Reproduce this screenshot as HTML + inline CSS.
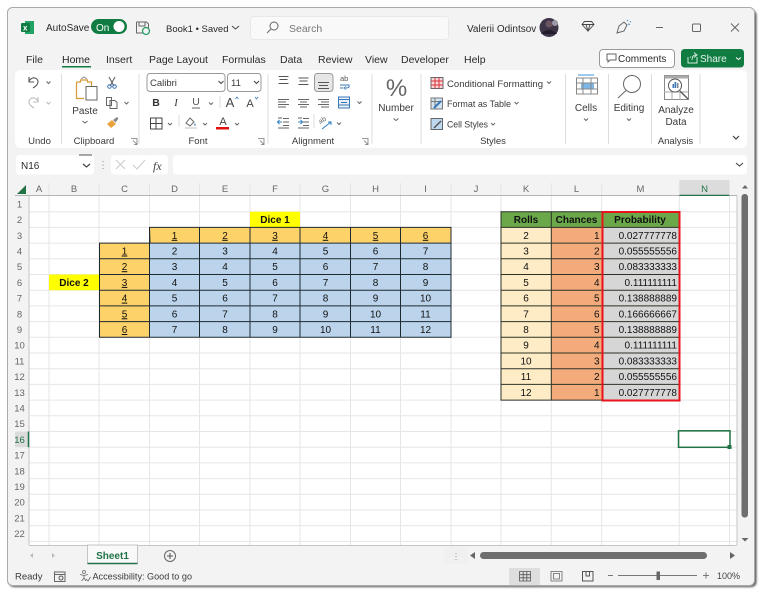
<!DOCTYPE html>
<html><head><meta charset="utf-8"><title>Book1 - Excel</title>
<style>
html,body{margin:0;padding:0;background:#fff;width:768px;height:599px;overflow:hidden}
svg{display:block;font-family:"Liberation Sans",sans-serif;filter:blur(.35px)}
.t{font-size:10.5px;fill:#2a2a2a}
.r{font-size:9.5px;fill:#3a3a3a}
.c{font-size:10px;fill:#111}
.b{font-weight:bold;fill:#111}
.u{text-decoration:underline}
.h{font-size:9.5px;fill:#666;text-anchor:middle}
.m{text-anchor:middle}
.e{text-anchor:end}
.l{fill:none;stroke:#666;stroke-width:1}
</style></head><body>
<svg width="768" height="599" viewBox="0 0 768 599" xmlns="http://www.w3.org/2000/svg">
<defs><filter id="sh" x="-5%" y="-5%" width="110%" height="110%"><feGaussianBlur stdDeviation="1"/></filter></defs>
<rect x="9" y="10" width="747.5" height="577" rx="5" fill="#555" filter="url(#sh)"/>
<rect x="7.5" y="7.5" width="747" height="578" rx="5" fill="#f3f3f3" stroke="#aaa" stroke-width="1"/>

<!-- title bar -->
<rect x="25" y="21" width="9" height="13" fill="#21a366"/><rect x="21" y="23" width="9" height="9" rx="1" fill="#107c41"/>
<text x="23" y="30.5" style="font-size:8px;font-weight:bold;fill:#fff">x</text>
<text x="46" y="31" class="t" style="font-size:10px">AutoSave</text>
<rect x="91" y="19" width="36" height="15" rx="7.5" fill="#107c41"/>
<text x="96" y="31" style="font-size:10px;fill:#fff">On</text>
<circle cx="119" cy="26.5" r="5.5" fill="#fff"/>
<path d="M136.5 22h10l2 2v4M136.5 22v11h6M139 22v4h6v-4" class="l"/><circle cx="146" cy="31" r="3.5" fill="none" stroke="#2a9a63" stroke-width="1.3"/>
<text x="166" y="32" class="t" style="font-size:9.5px">Book1 • Saved</text>
<path d="M232 26l3.5 3 3.500-3" fill="none" stroke="#444" stroke-width="1"/>
<rect x="250.5" y="16.5" width="198" height="23" rx="3" fill="#f9f9f9" stroke="#e8e8e8"/>
<circle cx="274" cy="26" r="4" class="l"/><path d="M271 29l-4 4" class="l"/>
<text x="289" y="32" class="t" style="font-size:10.5px;fill:#777">Search</text>
<text x="467" y="32" class="t" style="font-size:10px">Valerii Odintsov</text>
<circle cx="549" cy="27.5" r="9.5" fill="#3d3448"/><circle cx="549" cy="24" r="3.5" fill="#6b5560"/><path d="M541 34q8-8 16 0" fill="#231c2c"/><circle cx="555" cy="23" r="3" fill="#9a9aa8"/>
<path d="M582 24.5l2.5-3h7l2.500 3-6 6.500zM582 24.500h12M586 24.500l2 6.500 2-6.500" fill="none" stroke="#444" stroke-width=".9"/>
<path d="M617 33l2-7 5-4 3 3-3 6z" class="l"/><path d="M627 20l1 1M630 22l1-.5M628 24l2 .5" stroke="#4a90c8" fill="none"/>
<path d="M656 27.500h7" stroke="#666" fill="none"/>
<rect x="692.500" y="24" width="8" height="7.500" rx="1" class="l"/>
<path d="M731 23.500l8 8M739 23.500l-8 8" class="l"/>

<!-- tabs -->
<g class="t">
<text x="26" y="63">File</text><text x="62" y="63" style="fill:#222">Home</text>
<text x="106" y="63">Insert</text><text x="149" y="63">Page Layout</text>
<text x="222" y="63">Formulas</text><text x="280" y="63">Data</text>
<text x="318" y="63">Review</text><text x="365" y="63">View</text>
<text x="401" y="63">Developer</text><text x="464" y="63">Help</text>
</g>
<rect x="62" y="66" width="29" height="1.500" fill="#107c41"/>
<rect x="599.500" y="49.500" width="75" height="18" rx="3.500" fill="#fff" stroke="#999"/>
<path d="M607 54h9v6h-6l-2 2v-2h-1z" class="l"/>
<text x="618" y="62" class="t" style="font-size:10px">Comments</text>
<rect x="681" y="49" width="63" height="18.500" rx="3.500" fill="#107c41"/>
<path d="M688 57v6h9v-6M691 57h-1M692 60q0-5 4-5M694 52.500l3 2.500-3 2.500" fill="none" stroke="#cfe8da"/>
<text x="700" y="62" style="font-size:10px;fill:#e6f3ec">Share</text>
<path d="M736 57.500l2.500 2 2.500-2" fill="none" stroke="#fff"/>

<!-- ribbon -->
<rect x="15" y="70" width="732" height="78" rx="5" fill="#fff"/>
<path d="M61.500 74v70M139 74v70M268 74v70M372 74v70M421 74v70M565.500 74v70M608.500 74v70M651.500 74v70M700 74v70M220 96v12M179 115v12M314 114v14" stroke="#dcdcdc" fill="none"/>

<!-- undo group -->
<path d="M29 77v5h5M29 81q3-4 6-3t3 4-5 6" fill="none" stroke="#555" stroke-width="1.100"/>
<path d="M38 97v5h-5M38 101q-3-4-6-3t-3 4 5 6" fill="none" stroke="#bbb" stroke-width="1.100"/>
<path d="M46.500 81.500l2 2 2-2" class="l"/><path d="M46.500 102l2 2 2-2" fill="none" stroke="#bbb"/>
<text x="39.500" y="144" class="r m">Undo</text>

<!-- clipboard -->
<path d="M76.500 82h4v-2h7v2h4v5M84 98.500h-7.500v-16.500" fill="none" stroke="#d99a3a" stroke-width="1.200"/><path d="M81 79l3-2 3 2" fill="none" stroke="#888"/>
<rect x="86" y="86.500" width="11" height="13.500" fill="#fff" stroke="#666"/>
<text x="85" y="114" class="r m" style="font-size:10px">Paste</text>
<path d="M82.500 121l2.500 2 2.500-2" class="l"/>
<path d="M109 77l5 9M115 77l-5 9" stroke="#555" fill="none"/><circle cx="109.500" cy="86.500" r="1.800" fill="none" stroke="#3b78b8"/><circle cx="114.500" cy="86.500" r="1.800" fill="none" stroke="#3b78b8"/>
<path d="M106.500 97.500h5v8h-5zM110 100.500h5l2 2v6h-7z" fill="#fff" stroke="#666"/><path d="M124.500 102l2 2 2-2" class="l"/>
<path d="M107 124l5-4 4 4-5 4z" fill="#e8a33d"/><path d="M113 120l4-3 1.500 1.500-3 4z" fill="#888"/>
<text x="94" y="144" class="r m">Clipboard</text>
<path d="M131 138.500h6v6M133 140.500l4 4M134 144.500h3v-3" fill="none" stroke="#777" stroke-width=".8"/>

<!-- font -->
<rect x="147" y="73.500" width="78" height="18" rx="3" fill="#fff" stroke="#999"/>
<text x="150" y="86" class="r">Calibri</text><path d="M218.500 81l2.500 2.500 2.500-2.500" stroke="#444" fill="none"/>
<rect x="227.500" y="73.500" width="33.500" height="18" rx="3" fill="#fff" stroke="#999"/>
<text x="231" y="86" class="r">11</text><path d="M254 81l2.500 2.500 2.500-2.500" stroke="#444" fill="none"/>
<text x="156" y="106" class="m" style="font-size:10.500px;font-weight:bold;fill:#333">B</text>
<text x="176" y="106" class="m" style="font-size:10.500px;font-style:italic;font-family:'Liberation Serif',serif;fill:#333">I</text>
<text x="196" y="105" class="m" style="font-size:10.500px;fill:#555">U</text><path d="M192 108h8" class="l"/>
<path d="M209 102.500l2 2 2-2" class="l"/>
<text x="230" y="107" class="m" style="font-size:13px;fill:#444">A</text><path d="M235.500 99l1.500-2 1.500 2" stroke="#3b78b8" fill="none" stroke-width=".8"/>
<text x="250" y="107" class="m" style="font-size:11px;fill:#444">A</text><path d="M255 97l1.500 2 1.500-2" stroke="#3b78b8" fill="none" stroke-width=".8"/>
<path d="M150.500 118h11.500v11h-11.500zM156 118v11M150.500 123.500h11.500" fill="none" stroke="#444"/>
<path d="M168 123l2 2 2-2M203 123l2 2 2-2M235 123l2 2 2-2" class="l"/>
<path d="M186 123l4-5 4 4-4 4z" fill="#fff" stroke="#666"/><path d="M195 123l1 2.500h-2z" fill="#3b78b8"/><rect x="185" y="127" width="12" height="2" fill="#e0e0e0"/>
<text x="223" y="125" class="m" style="font-size:11px;fill:#444">A</text><rect x="216" y="127" width="13" height="2.500" fill="#e01010"/>
<text x="198" y="144" class="r m">Font</text>
<path d="M258 138.500h6v6M260 140.500l4 4M261 144.500h3v-3" fill="none" stroke="#777" stroke-width=".8"/>

<!-- alignment -->
<rect x="314.500" y="73.500" width="18.500" height="18" rx="3" fill="#e6e6e6" stroke="#999"/>
<path d="M278.500 76.500h10M279.500 79.500h8M278.500 83.500h10M298.500 78h10M299.500 81h8M298.500 84.500h10M318 82.500h11M319 85.500h9M318 88.500h11" fill="none" stroke="#555"/>
<text x="340" y="81" style="font-size:7.500px;fill:#555">ab</text><path d="M340 85h9q1 3-3 3M346 86.500l-2 1.500 2 1.500M340 88h3" fill="none" stroke="#3b78b8"/>
<path d="M278 99.500h11M278 102h8M278 104.500h11M278 107h8M298 99.500h11M300 102h7M298 104.500h11M300 107h7M318 99.500h11M321 102h8M318 104.500h11M321 107h8" fill="none" stroke="#666"/>
<rect x="338.500" y="97" width="11" height="11" fill="#e8f0f8" stroke="#3b78b8"/><path d="M338.500 99.500h11M338.500 105h11M341 102.500h6" stroke="#3b78b8" fill="none"/>
<path d="M357.500 101.500l2 2 2-2" class="l"/>
<path d="M283 118.500h6M283 122h6M283 125.500h6M278 128h11M278 118h4" fill="none" stroke="#666"/><path d="M282 122h-4M279.500 120l-2 2 2 2" fill="none" stroke="#2f7fc0"/>
<path d="M303 118.500h6M303 122h6M303 125.500h6M298 128h11M298 118h4" fill="none" stroke="#666"/><path d="M298 122h4M300.500 120l2 2-2 2" fill="none" stroke="#2f7fc0"/>
<text x="320" y="124" style="font-size:7px;fill:#666" transform="rotate(-30 320 124)">ab</text><path d="M322 129l9-7M328 122h3v3" fill="none" stroke="#2f7fc0"/>
<path d="M337 122.500l2 2 2-2" class="l"/>
<text x="313" y="144" class="r m">Alignment</text>
<path d="M362 138.500h6v6M364 140.500l4 4M365 144.500h3v-3" fill="none" stroke="#777" stroke-width=".8"/>

<!-- number -->
<text x="396.500" y="96" class="m" style="font-size:24px;fill:#666">%</text>
<text x="396" y="111" class="r m" style="font-size:10px">Number</text>
<path d="M393.500 118.500l2.500 2 2.500-2" class="l"/>

<!-- styles -->
<rect x="431" y="77.500" width="12" height="11" fill="#f7d8d8" stroke="#666"/><path d="M431 81h12M431 85h12M435 77.500v11M439 77.500v11" stroke="#d8323c" fill="none"/>
<rect x="431" y="98" width="11.500" height="11" fill="#d3e4f2" stroke="#777"/><path d="M431 101.500h11M435 98v11" stroke="#777"/><path d="M434 108l7-7" stroke="#3b78b8" stroke-width="2"/>
<rect x="431" y="118.500" width="11.500" height="11" fill="#bcd9f0" stroke="#666"/><path d="M434 128l7-7" stroke="#555" stroke-width="1.500"/>
<g class="r"><text x="447" y="87" textLength="96" lengthAdjust="spacingAndGlyphs">Conditional Formatting</text><text x="447" y="107" textLength="64" lengthAdjust="spacingAndGlyphs">Format as Table</text><text x="447" y="127.500" textLength="41" lengthAdjust="spacingAndGlyphs">Cell Styles</text></g>
<path d="M547 81.500l2 2 2-2M514.500 102l2 2 2-2M491 123l2 2 2-2" class="l"/>
<text x="493" y="144" class="r m">Styles</text>

<!-- cells -->
<rect x="576.500" y="78" width="21" height="16" fill="#fff" stroke="#888"/><rect x="581" y="83" width="13" height="6" fill="#7db7e8"/>
<path d="M576.500 83h21M576.500 89h21M583 78v16M591 78v16" stroke="#888" fill="none"/><path d="M578 75h16" stroke="#7db7e8" stroke-width="1.500"/>
<text x="586" y="111" class="r m" style="font-size:10px">Cells</text>
<path d="M584 118.500l2 2 2-2" class="l"/>
<!-- editing -->
<circle cx="632" cy="84" r="8.500" class="l"/><path d="M626 90.500l-8 7.500" class="l"/>
<text x="629" y="111" class="r m" style="font-size:10px">Editing</text>
<path d="M627 118.500l2 2 2-2" class="l"/>
<!-- analyze -->
<rect x="664.500" y="75.500" width="24" height="24" fill="#fff" stroke="#888"/><rect x="664.500" y="75.500" width="24" height="3" fill="#aaa"/>
<path d="M664 92h24M672 92v8M680 92v8" stroke="#aaa" fill="none"/>
<circle cx="675" cy="85.500" r="6.500" fill="#fff" stroke="#555"/><rect x="672.500" y="84" width="1.500" height="4" fill="#3b78b8"/><rect x="674.500" y="82" width="1.800" height="6" fill="#3b78b8"/><rect x="677" y="83" width="1.500" height="5" fill="#888"/>
<path d="M680 91l8 8" stroke="#555" stroke-width="1.300"/>
<text x="676" y="113" class="r m" style="font-size:10px">Analyze</text><text x="676" y="125" class="r m" style="font-size:10px">Data</text>
<text x="675.500" y="144" class="r m">Analysis</text>
<path d="M733 136l3 3 3-3" fill="none" stroke="#444" stroke-width="1.200"/>

<!-- formula bar -->
<rect x="16" y="155" width="78" height="19.500" rx="3" fill="#fff"/>
<text x="21" y="169" class="t" style="font-size:10px">N16</text>
<path d="M79 155h13" stroke="#555"/><path d="M83 164l3.500 3 3.500-3" fill="none" stroke="#444" stroke-width="1.200"/>
<path d="M103 161v1M103 164.500v1M103 168v1" stroke="#888"/>
<rect x="111" y="155" width="57" height="19.500" rx="3" fill="#fff"/>
<path d="M116 160l9 9M125 160l-9 9M133 165l4 4 8-9" fill="none" stroke="#ccc" stroke-width="1.100"/>
<text x="153" y="170" style="font-size:12px;font-style:italic;font-family:'Liberation Serif',serif;fill:#444">fx</text>
<rect x="173" y="155" width="574" height="19.500" rx="3" fill="#fff"/>
<path d="M736 163l3.500 3 3.500-3" fill="none" stroke="#444" stroke-width="1.100"/>

<!-- headers -->
<path d="M17 194h9v-9z" fill="#217346"/>
<rect x="679.300" y="180" width="50" height="15.500" fill="#dcdcdc"/>
<path d="M15 195.500h722" stroke="#b5b5b5"/><path d="M679.300 195.500h50" stroke="#217346" stroke-width="1.500"/>
<path d="M49 183v12M99 183v12M149.500 183v12M199.500 183v12M250 183v12M300 183v12M350.500 183v12M400.500 183v12M451 183v12M501 183v12M551.300 183v12M601.700 183v12M679.300 183v12M729.500 183v12" stroke="#e4e4e4"/>
<g class="h">
<text x="39" y="192">A</text><text x="74" y="192">B</text><text x="124.500" y="192">C</text><text x="174.500" y="192">D</text><text x="225" y="192">E</text><text x="275" y="192">F</text><text x="325.500" y="192">G</text><text x="375.500" y="192">H</text><text x="425.500" y="192">I</text><text x="476" y="192">J</text><text x="526" y="192">K</text><text x="576.500" y="192">L</text><text x="640.500" y="192">M</text><text x="704.500" y="192" style="fill:#217346">N</text>
</g>
<!-- grid -->
<rect x="29" y="196" width="708" height="349" fill="#fff"/>
<path d="M29 211.700h708M29 227.400h708M29 243.100h708M29 258.800h708M29 274.500h708M29 290.200h708M29 305.900h708M29 321.600h708M29 337.300h708M29 353h708M29 368.700h708M29 384.400h708M29 400.100h708M29 415.800h708M29 431.500h708M29 447.200h708M29 462.900h708M29 478.600h708M29 494.300h708M29 510h708M29 525.700h708M29 541.400h708M49 196v349M99 196v349M149.500 196v349M199.500 196v349M250 196v349M300 196v349M350.500 196v349M400.500 196v349M451 196v349M501 196v349M551.300 196v349M601.700 196v349M679.300 196v349M729.500 196v349" stroke="#e6e6e6" fill="none"/>
<path d="M29 196v349M29 545.500h708M737 196v349" stroke="#c4c4c4" fill="none"/>
<rect x="15" y="431.500" width="14" height="15.700" fill="#dcdcdc"/><path d="M28.500 431.500v15.700" stroke="#217346" stroke-width="1.500"/>
<g class="h">
<text x="19.500" y="207.400">1</text><text x="19.500" y="223">2</text><text x="19.500" y="238.800">3</text><text x="19.500" y="254.500">4</text><text x="19.500" y="270.200">5</text><text x="19.500" y="285.900">6</text><text x="19.500" y="301.600">7</text><text x="19.500" y="317.300">8</text><text x="19.500" y="333">9</text><text x="19.500" y="348.700">10</text><text x="19.500" y="364.400">11</text><text x="19.500" y="380">12</text><text x="19.500" y="395.800">13</text><text x="19.500" y="411.500">14</text><text x="19.500" y="427.200">15</text><text x="19.500" y="442.900" style="fill:#217346">16</text><text x="19.500" y="458.600">17</text><text x="19.500" y="474.300">18</text><text x="19.500" y="490">19</text><text x="19.500" y="505.700">20</text><text x="19.500" y="521.400">21</text><text x="19.500" y="537">22</text>
</g>

<!-- Dice table fills -->
<rect x="250" y="211.700" width="50" height="15.700" fill="#ffff00"/>
<rect x="49" y="274.500" width="50" height="15.700" fill="#ffff00"/>
<rect x="149.500" y="227.400" width="301.500" height="15.700" fill="#fdd268"/>
<rect x="99" y="243.100" width="50.500" height="94.200" fill="#fdd268"/>
<rect x="149.500" y="243.100" width="301.500" height="94.200" fill="#bbd4ec"/>
<path d="M149.500 227.400h301.500v109.900h-351.500v-94.200h50.500zM99 258.800h352M99 274.500h352M99 290.200h352M99 305.900h352M99 321.600h352M149.500 243.100h301.500M149.500 227.400v109.900M199.500 227.400v109.900M250 227.400v109.900M300 227.400v109.900M350.500 227.400v109.900M400.500 227.400v109.900" fill="none" stroke="#1f2a30" stroke-width="1"/>
<g class="c b m">
<text x="275" y="223">Dice 1</text><text x="74" y="285.900">Dice 2</text>
</g>
<g class="c m">
<g class="u"><text x="174.500" y="238.800">1</text><text x="225" y="238.800">2</text><text x="275" y="238.800">3</text><text x="325.500" y="238.800">4</text><text x="375.500" y="238.800">5</text><text x="425.500" y="238.800">6</text>
<text x="124.500" y="254.500">1</text><text x="124.500" y="270.200">2</text><text x="124.500" y="285.900">3</text><text x="124.500" y="301.600">4</text><text x="124.500" y="317.300">5</text><text x="124.500" y="333">6</text></g>
<text x="174.500" y="254.500">2</text><text x="225" y="254.500">3</text><text x="275" y="254.500">4</text><text x="325.500" y="254.500">5</text><text x="375.500" y="254.500">6</text><text x="425.500" y="254.500">7</text>
<text x="174.500" y="270.200">3</text><text x="225" y="270.200">4</text><text x="275" y="270.200">5</text><text x="325.500" y="270.200">6</text><text x="375.500" y="270.200">7</text><text x="425.500" y="270.200">8</text>
<text x="174.500" y="285.900">4</text><text x="225" y="285.900">5</text><text x="275" y="285.900">6</text><text x="325.500" y="285.900">7</text><text x="375.500" y="285.900">8</text><text x="425.500" y="285.900">9</text>
<text x="174.500" y="301.600">5</text><text x="225" y="301.600">6</text><text x="275" y="301.600">7</text><text x="325.500" y="301.600">8</text><text x="375.500" y="301.600">9</text><text x="425.500" y="301.600">10</text>
<text x="174.500" y="317.300">6</text><text x="225" y="317.300">7</text><text x="275" y="317.300">8</text><text x="325.500" y="317.300">9</text><text x="375.500" y="317.300">10</text><text x="425.500" y="317.300">11</text>
<text x="174.500" y="333">7</text><text x="225" y="333">8</text><text x="275" y="333">9</text><text x="325.500" y="333">10</text><text x="375.500" y="333">11</text><text x="425.500" y="333">12</text>
</g>

<!-- probability table -->
<rect x="501" y="211.700" width="178.300" height="15.700" fill="#6aa84a"/>
<rect x="501" y="227.400" width="50.300" height="172.700" fill="#feecc6"/>
<rect x="551.300" y="227.400" width="50.400" height="172.700" fill="#f3ab7c"/>
<rect x="601.700" y="227.400" width="77.600" height="172.700" fill="#d6d6d6"/>
<path d="M501 211.700h178v188.400h-178zM501 227.400h178M501 243.100h178M501 258.800h178M501 274.500h178M501 290.200h178M501 305.900h178M501 321.600h178M501 337.300h178M501 353h178M501 368.700h178M501 384.400h178M551.300 211.700v188.400" fill="none" stroke="#2c3326" stroke-width="1"/>
<rect x="602.500" y="212" width="77" height="188.500" fill="none" stroke="#e8141c" stroke-width="2"/>
<g class="c b m"><text x="526" y="223">Rolls</text><text x="576.500" y="223">Chances</text><text x="640" y="223">Probability</text></g>
<g class="c m">
<text x="526" y="238.800">2</text><text x="526" y="254.500">3</text><text x="526" y="270.200">4</text><text x="526" y="285.900">5</text><text x="526" y="301.600">6</text><text x="526" y="317.300">7</text><text x="526" y="333">8</text><text x="526" y="348.700">9</text><text x="526" y="364.400">10</text><text x="526" y="380">11</text><text x="526" y="395.800">12</text>
</g>
<g class="c e">
<text x="599.500" y="238.800">1</text><text x="599.500" y="254.500">2</text><text x="599.500" y="270.200">3</text><text x="599.500" y="285.900">4</text><text x="599.500" y="301.600">5</text><text x="599.500" y="317.300">6</text><text x="599.500" y="333">5</text><text x="599.500" y="348.700">4</text><text x="599.500" y="364.400">3</text><text x="599.500" y="380">2</text><text x="599.500" y="395.800">1</text>
<text x="677" y="238.800">0.027777778</text><text x="677" y="254.500">0.055555556</text><text x="677" y="270.200">0.083333333</text><text x="677" y="285.900">0.111111111</text><text x="677" y="301.600">0.138888889</text><text x="677" y="317.300">0.166666667</text><text x="677" y="333">0.138888889</text><text x="677" y="348.700">0.111111111</text><text x="677" y="364.400">0.083333333</text><text x="677" y="380">0.055555556</text><text x="677" y="395.800">0.027777778</text>
</g>

<!-- selection -->
<rect x="678.500" y="430.800" width="51.500" height="16.500" fill="none" stroke="#217346" stroke-width="1.500"/>
<rect x="727.500" y="445" width="4" height="4" fill="#217346"/>

<!-- scrollbars -->
<path d="M745 185l-3 3.500h6z" fill="#666"/>
<rect x="741.500" y="194" width="6.500" height="323.500" rx="3" fill="#6e6e6e"/>
<path d="M745 541.500l-3.500-3.500h7z" fill="#666"/>
<rect x="444" y="546" width="24" height="18" fill="#f0f0f0"/>
<path d="M456 553v1M456 556v1M456 559v1" stroke="#999"/>
<path d="M470 555.500l5-3.500v7z" fill="#666"/>
<rect x="480" y="552" width="227" height="7" rx="3.500" fill="#6e6e6e"/>
<path d="M735 555.500l-5-3.500v7z" fill="#666"/>

<!-- sheet tabs -->
<path d="M33 553l-3 2.500 3 2.500zM52 553l3 2.500-3 2.500z" fill="#bbb"/>
<path d="M87.500 564v-19h50v19" fill="#f9f9f9" stroke="#c4c4c4"/>
<path d="M87.500 563.500h50" stroke="#217346" stroke-width="1.500"/>
<text x="112.500" y="559" class="m" style="font-size:10px;font-weight:bold;fill:#217346">Sheet1</text>
<circle cx="170" cy="556" r="5.500" class="l"/><path d="M167 556h6M170 553v6" stroke="#555"/>

<!-- status bar -->
<text x="15" y="579.500" class="r" style="font-size:9.500px">Ready</text>
<rect x="54.500" y="572" width="10.500" height="9.500" fill="none" stroke="#666"/><path d="M54.500 574.500h10.500" stroke="#666"/><circle cx="61" cy="578" r="2" fill="none" stroke="#555"/>
<circle cx="84" cy="572" r="1.500" fill="none" stroke="#666" stroke-width=".8"/><path d="M80 574.500l4 1 4-1M84 575.500v2.500l-2.500 3M84 578l2 3M86 579l2 2 2.500-4" fill="none" stroke="#666" stroke-width=".8"/>
<text x="92.500" y="579.500" class="r" textLength="99.500" lengthAdjust="spacingAndGlyphs" style="font-size:9.500px">Accessibility: Good to go</text>
<rect x="509" y="568" width="31" height="17" fill="#dedede"/>
<path d="M519.500 571.500h11v9.500h-11zM519.500 574.700h11M519.500 577.800h11M523.200 571.500v9.500M526.800 571.500v9.500" fill="none" stroke="#555" stroke-width=".8"/>
<path d="M551 571.500h11v9.500h-11zM553.500 573.500h6v5.500h-6z" fill="none" stroke="#666" stroke-width=".8"/>
<path d="M582.500 571.500h10.500v9.500h-10.500zM586 571.500v4.500h3.500v-4.500" fill="none" stroke="#555"/>
<path d="M608 575.500h5M618 575.500h79M703 575.500h6M706 572.500v6" stroke="#777" fill="none"/>
<rect x="656.500" y="571.500" width="3.500" height="8.500" fill="#666"/>
<text x="717" y="579" style="font-size:9px;fill:#444">100%</text>
</svg>
</body></html>
